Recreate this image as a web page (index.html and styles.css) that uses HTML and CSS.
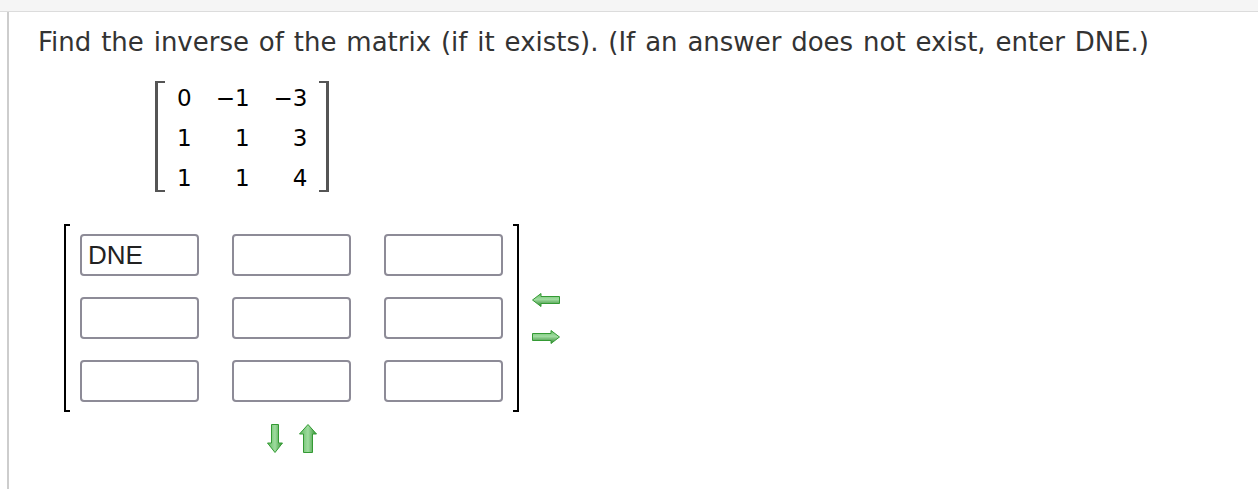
FILE: index.html
```html
<!DOCTYPE html>
<html>
<head>
<meta charset="utf-8">
<link rel="stylesheet" href="styles.css">
</head>
<body>
<div class="topbar"></div>
<div class="panel">
  <p class="question">Find the inverse of the matrix (if it exists). (If an answer does not exist, enter DNE.)</p>
  <div class="given">
    <div class="gbr gbr-left"></div>
    <div class="gcells">
      <span>0</span><span>−1</span><span>−3</span>
      <span>1</span><span>1</span><span>3</span>
      <span>1</span><span>1</span><span>4</span>
    </div>
    <div class="gbr gbr-right"></div>
  </div>
  <div class="answer">
    <div class="answer-main">
      <div class="amatrix">
        <div class="abr abr-left"></div>
        <div class="agrid">
          <input class="cell" type="text" value="DNE">
          <input class="cell" type="text">
          <input class="cell" type="text">
          <input class="cell" type="text">
          <input class="cell" type="text">
          <input class="cell" type="text">
          <input class="cell" type="text">
          <input class="cell" type="text">
          <input class="cell" type="text">
        </div>
        <div class="abr abr-right"></div>
      </div>
      <div class="col-arrows">
        <svg class="varrow" width="16" height="29" viewBox="0 0 16 29">
          <defs>
            <linearGradient id="gv" x1="0" y1="0" x2="1" y2="0">
              <stop offset="0" stop-color="#5fb85f"/>
              <stop offset="0.5" stop-color="#9fdc9f"/>
              <stop offset="1" stop-color="#2f8f2f"/>
            </linearGradient>
          </defs>
          <path d="M4.5 0.5 H11.5 V19 H15.5 L8 28.5 L0.5 19 H4.5 Z" fill="url(#gv)" stroke="#349a34" stroke-width="1"/>
        </svg>
        <svg class="varrow" width="18" height="29" viewBox="0 0 18 29">
          <path d="M9 0.5 L17.5 10 H13.5 V28.5 H4.5 V10 H0.5 Z" fill="url(#gv)" stroke="#349a34" stroke-width="1"/>
        </svg>
      </div>
    </div>
    <div class="row-arrows">
      <svg width="28" height="14" viewBox="0 0 28 14">
        <defs>
          <linearGradient id="gh" x1="0" y1="0" x2="0" y2="1">
            <stop offset="0" stop-color="#66bf66"/>
            <stop offset="0.45" stop-color="#a2dca2"/>
            <stop offset="1" stop-color="#2a862a"/>
          </linearGradient>
        </defs>
        <path d="M0.5 7 L9 0.5 V3.5 H27.5 V10.5 H9 V13.5 Z" fill="url(#gh)" stroke="#349a34" stroke-width="1"/>
      </svg>
      <svg width="28" height="14" viewBox="0 0 28 14">
        <path d="M27.5 7 L19 0.5 V3.5 H0.5 V10.5 H19 V13.5 Z" fill="url(#gh)" stroke="#349a34" stroke-width="1"/>
      </svg>
    </div>
  </div>
</div>
</body>
</html>
```
FILE: styles.css
```css
html, body {
  margin: 0;
  padding: 0;
  background: #fff;
}
body {
  font-family: "DejaVu Sans", Verdana, sans-serif;
}
.topbar {
  height: 11px;
  background: #f5f5f5;
  border-bottom: 1px solid #dcdcdc;
}
.panel {
  margin-left: 7px;
  border-left: 2px solid #cdcdcd;
  padding: 15px 0 0 29px;
  min-height: calc(100vh - 27px);
  box-sizing: content-box;
}
.question {
  margin: 0;
  font-size: 26px;
  line-height: 30px;
  word-spacing: 1.6px;
  color: #333;
  white-space: nowrap;
}
.given {
  display: flex;
  width: fit-content;
  margin: 21px 0 0 117px;
}
.gbr {
  width: 7px;
  margin: 3px 0 6px 0;
  border-top: 2px solid #555;
  border-bottom: 2px solid #555;
}
.gbr-left {
  border-left: 3px solid #555;
}
.gbr-right {
  border-right: 3px solid #555;
}
.gcells {
  display: grid;
  grid-template-columns: repeat(3, auto);
  grid-auto-rows: 40px;
  column-gap: 24px;
  justify-items: end;
  align-items: center;
  padding: 0 12px 0 12px;
  font-size: 23px;
  color: #000;
}
.answer {
  display: flex;
  align-items: center;
  margin: 26px 0 0 26px;
}
.answer-main {
  display: flex;
  flex-direction: column;
  align-items: center;
}
.amatrix {
  display: flex;
}
.abr {
  width: 4px;
  border-top: 2px solid #000;
  border-bottom: 2px solid #000;
}
.abr-left {
  border-left: 2px solid #000;
}
.abr-right {
  border-right: 2px solid #000;
}
.agrid {
  display: grid;
  grid-template-columns: repeat(3, 119px);
  grid-auto-rows: 42px;
  column-gap: 33px;
  row-gap: 21px;
  padding: 10px 10px;
}
.cell {
  display: block;
  box-sizing: border-box;
  width: 119px;
  height: 42px;
  margin: 0;
  border: 2px solid #8d8b97;
  border-radius: 4px;
  padding: 0 6px;
  font-family: "Liberation Sans", Arial, sans-serif;
  font-size: 26px;
  color: #222;
  background: #fff;
  outline: none;
}
.col-arrows {
  display: flex;
  gap: 16px;
  margin-top: 12px;
  align-items: flex-start;
}
.varrow {
  display: block;
}
.row-arrows {
  display: flex;
  flex-direction: column;
  gap: 23px;
  margin-left: 13px;
  margin-bottom: 41px;
}
.row-arrows svg {
  display: block;
}
```
